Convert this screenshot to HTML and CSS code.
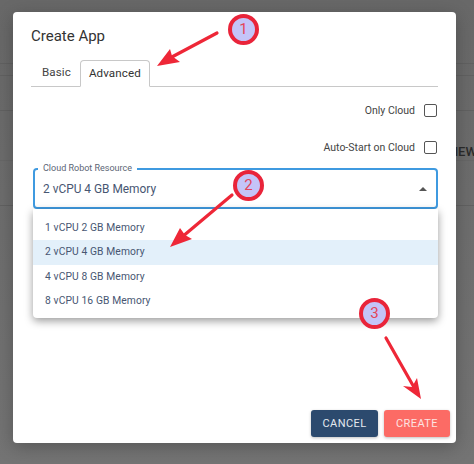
FILE: index.html
```html
<!DOCTYPE html>
<html lang="en">
<head>
<meta charset="utf-8">
<title>Create App</title>
<link rel="stylesheet" href="styles.css">
</head>
<body>
<div class="backdrop">
  <div class="bg-line l1"></div>
  <div class="bg-line l2"></div>
  <div class="bg-line l3"></div>
  <div class="bg-line l4"></div>
  <div class="bg-line l5"></div>
  <span class="bg-text">VIEW</span>
  <div class="dialog">
    <h2 class="title">Create App</h2>
    <div class="tabs">
      <div class="tab">Basic</div>
      <div class="tab active">Advanced</div>
    </div>
    <div class="check-row"><span>Only Cloud</span><i class="box"></i></div>
    <div class="check-row second"><span>Auto-Start on Cloud</span><i class="box"></i></div>
    <div class="select">
      <span class="legend">Cloud Robot Resource</span>
      <span class="value">2 vCPU 4 GB Memory</span>
      <i class="caret"></i>
      <ul class="menu">
        <li>1 vCPU 2 GB Memory</li>
        <li class="selected">2 vCPU 4 GB Memory</li>
        <li>4 vCPU 8 GB Memory</li>
        <li>8 vCPU 16 GB Memory</li>
      </ul>
    </div>
    <div class="actions">
      <button class="btn cancel">CANCEL</button>
      <button class="btn create">CREATE</button>
    </div>
  </div>
  <div class="step s1">1</div>
  <div class="step s2">2</div>
  <div class="step s3">3</div>
  <svg class="arrows" width="474" height="464" viewBox="0 0 474 464">
    <g fill="none" stroke="#ee2737" stroke-width="3.2" stroke-linecap="round">
      <line x1="217" y1="33" x2="170" y2="58"/>
      <line x1="232" y1="195" x2="182" y2="237"/>
      <line x1="386" y1="338" x2="415" y2="389"/>
    </g>
    <g fill="#ee2737">
      <polygon points="157,66 170,49 172,56 180,62"/>
      <polygon points="170,247 180,228 185,235 192,239"/>
      <polygon points="421,399 403,386 412,387 417,378"/>
    </g>
  </svg>
</div>
</body>
</html>
```
FILE: styles.css
```css
* { box-sizing: border-box; }
html, body { margin: 0; padding: 0; }
body { width: 474px; height: 464px; overflow: hidden; font-family: Roboto, "Liberation Sans", sans-serif; }
.backdrop { position: relative; width: 474px; height: 464px; background: linear-gradient(#686868, #747474); padding: 12px 18px 21px 13px; overflow: hidden; }
.bg-line { position: absolute; left: 0; right: 0; height: 1px; background: #616161; }
.l1 { top: 63px; } .l2 { top: 75px; } .l3 { top: 110px; } .l4 { top: 205px; } .l5 { top: 160px; opacity: .5; }
.bg-text { position: absolute; left: 446px; top: 144px; font-size: 13px; font-weight: 500; color: #2a2a2a; }
.dialog { position: relative; width: 443px; height: 431px; background: #fff; border-radius: 4px; box-shadow: 0 4px 18px rgba(0,0,0,.25); padding: 15px 18px 0; color: #333; display: flex; flex-direction: column; }
.title { margin: 0; font-size: 15px; line-height: 18px; font-weight: 400; color: #333; }
.tabs { display: flex; margin-top: 15px; height: 27px; border-bottom: 1px solid #c8c8c8; padding-left: 1px; }
.tab { font-size: 11.6px; letter-spacing: .1px; line-height: 25px; padding: 0 10px; color: #444; }
.tab.active { color: #333; height: 27px; margin-left: -1px; border: 1px solid #c8c8c8; border-bottom: 1px solid #fff; border-radius: 4px 4px 0 0; padding: 0 8px; }
.check-row { display: flex; justify-content: flex-end; align-items: center; gap: 9px; margin-top: 13px; height: 20px; font-size: 10.5px; color: #444; }
.check-row.second { margin-top: 17px; }
.box { width: 13px; height: 13px; border: 1.5px solid #555; border-radius: 2px; margin-right: 1px; }
.select { position: relative; margin-top: 11px; margin-left: 2px; width: 405px; height: 41px; border: 2px solid #3f9ae0; border-radius: 4px; display: flex; align-items: center; padding-left: 8px; font-size: 11.9px; color: #475672; }
.legend { position: absolute; left: 3px; top: -8px; background: #fff; padding: 0 5px; font-size: 9px; line-height: 12px; color: #5c6575; }
.caret { position: absolute; right: 9px; top: 17px; width: 0; height: 0; border-left: 4px solid transparent; border-right: 4px solid transparent; border-bottom: 4px solid #555; }
.menu { position: absolute; left: -2px; top: 39px; width: 405px; height: 109px; margin: 0; padding: 7px 0 0; list-style: none; background: #fff; border-radius: 0 0 4px 4px; box-shadow: 0 3px 8px rgba(0,0,0,.4); }
.menu li { height: 24.3px; line-height: 23px; padding-left: 12px; font-size: 10.3px; color: #475672; letter-spacing: .1px; }
.menu li.selected { background: #e3f0fa; }
.actions { position: absolute; right: 6px; bottom: 6px; display: flex; gap: 6px; }
.btn { height: 27px; border: 0; border-radius: 3px; padding: 0; font-family: inherit; font-size: 11px; letter-spacing: .4px; box-shadow: 0 1px 3px rgba(0,0,0,.25); }
.cancel { width: 67px; background: #2c4a6e; color: #e4e9ef; }
.create { width: 66px; background: #fc6b65; color: #fde3e1; }
.step { position: absolute; z-index: 3; width: 31px; height: 31px; border: 4px solid #e9243a; border-radius: 50%; background: #c4c4f8; color: #e3445a; font-size: 15px; line-height: 23px; text-align: center; }
.s1 { left: 228px; top: 14px; }
.s2 { left: 233px; top: 170px; }
.s3 { left: 359px; top: 298px; }
.arrows { position: absolute; z-index: 3; left: 0; top: 0; }
```
